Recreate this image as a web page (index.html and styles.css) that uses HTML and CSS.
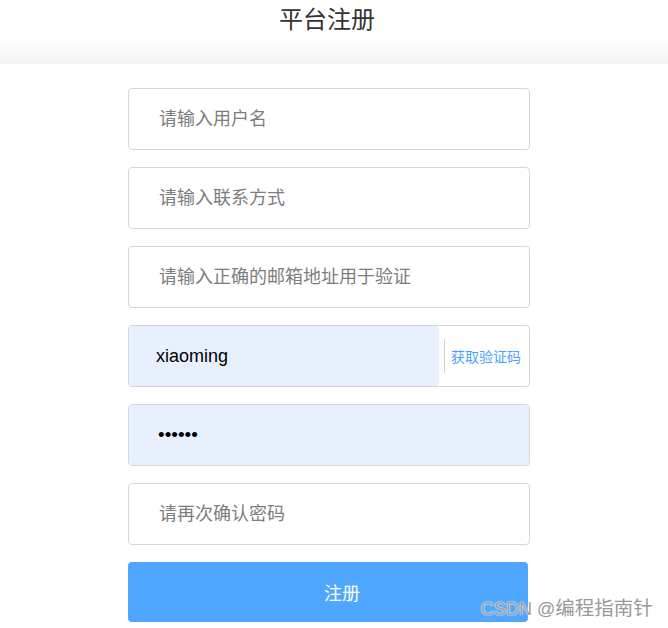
FILE: index.html
```html
<!DOCTYPE html>
<html lang="zh">
<head>
<meta charset="utf-8">
<title>平台注册</title>
<link rel="stylesheet" href="styles.css">
</head>
<body>
<div class="page">
  <header class="header">
    <h1 class="title">平台注册</h1>
  </header>
  <form class="form">
    <div class="field"><input class="input" type="text" placeholder="请输入用户名"></div>
    <div class="field"><input class="input" type="text" placeholder="请输入联系方式"></div>
    <div class="field"><input class="input" type="text" placeholder="请输入正确的邮箱地址用于验证"></div>
    <div class="field field-code">
      <input class="input input-fill input-code" type="text" value="xiaoming">
      <span class="divider"></span>
      <span class="code-btn">获取验证码</span>
    </div>
    <div class="field"><input class="input input-fill input-pass" type="password" value="123456"></div>
    <div class="field"><input class="input" type="password" placeholder="请再次确认密码"></div>
    <button class="submit" type="button">注册</button>
  </form>
  <div class="watermark">CSDN @<span class="wm-cjk">编程指南针</span></div>
</div>
</body>
</html>
```

FILE: styles.css
```css
* { box-sizing: border-box; }
html, body {
  margin: 0;
  padding: 0;
  background: #fff;
  font-family: "Liberation Sans", "Noto Sans CJK SC", sans-serif;
}
.page {
  width: 100%;
  height: 628px;
  overflow: hidden;
}
.header {
  height: 64px;
  padding-right: 14px;
  background: linear-gradient(to bottom, #ffffff 0%, #ffffff 60%, #f3f3f3 100%);
  display: flex;
  justify-content: center;
}
.title {
  margin: 0;
  font-size: 24px;
  line-height: 36px;
  font-weight: normal;
  color: #333;
  font-family: "Noto Sans CJK SC", sans-serif;
}
.form {
  width: 402px;
  margin: 24px 0 0 128px;
  display: flex;
  flex-direction: column;
  gap: 17px;
}
.field {
  height: 62px;
  border: 1px solid #d4d6da;
  border-radius: 4px;
  background: #fff;
  display: flex;
  align-items: center;
  overflow: hidden;
}
.input {
  flex: 1;
  min-width: 0;
  height: 100%;
  border: none;
  outline: none;
  background: transparent;
  padding: 0 0 0 30px;
  font-size: 18px;
  color: #000;
  font-family: "Liberation Sans", "Noto Sans CJK SC", sans-serif;
}
.input::placeholder {
  color: #7d7d7d;
  font-family: "Noto Sans CJK SC", sans-serif;
  font-size: 18px;
}
.input-fill {
  background: #e8f0fe;
}
.input-code {
  flex: 0 0 310px;
  border-radius: 0 4px 4px 0;
  padding-left: 27px;
}
.input-pass {
  padding-left: 29px;
  font-size: 19px;
}
.divider {
  width: 1px;
  height: 34px;
  background: #d0d0d0;
  margin-left: 5px;
}
.code-btn {
  margin-left: 6px;
  font-size: 14px;
  color: #4c9fff;
  font-family: "Noto Sans CJK SC", sans-serif;
  white-space: nowrap;
}
.submit {
  height: 60px;
  width: 400px;
  border: none;
  border-radius: 4px;
  background: #4ea6ff;
  color: #fff;
  font-size: 18px;
  padding-left: 34px;
  font-family: "Noto Sans CJK SC", sans-serif;
  cursor: pointer;
}
.watermark {
  position: absolute;
  left: 481px;
  top: 595px;
  font-size: 18px;
  line-height: 24px;
  color: #9a9a9a;
  font-family: "Liberation Sans", "Noto Sans CJK SC", sans-serif;
  text-shadow: 0 0 2px #fff, 0 0 1px #fff;
  white-space: nowrap;
}
.wm-cjk {
  font-size: 19.5px;
  font-family: "Noto Sans CJK SC", sans-serif;
}
```
